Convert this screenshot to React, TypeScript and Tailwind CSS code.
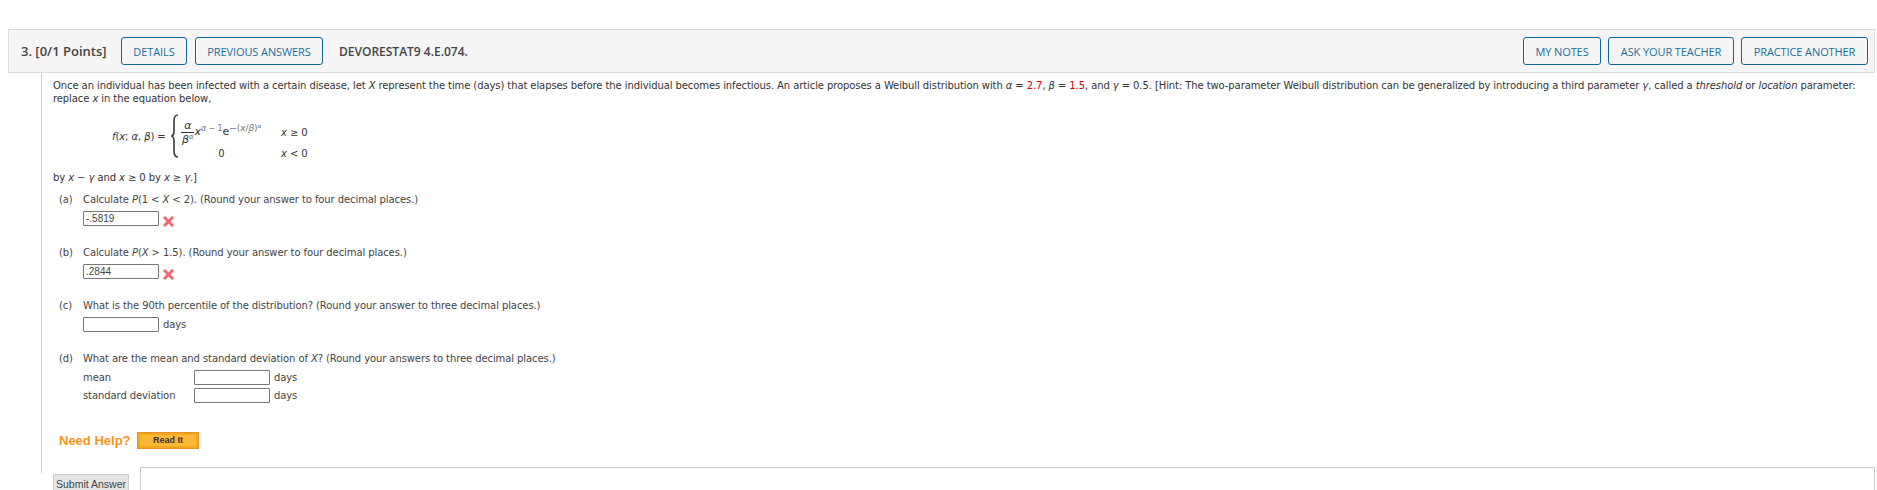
import React from 'react';

const ActionButton: React.FC<{ label: string; className: string }> = ({ label, className }) => (
  <button className={`h-[28px] rounded-[3px] border border-[#10669c] text-[11px] tracking-[-0.1px] text-[#1c6e9c] font-['Open_Sans',sans-serif] ${className}`}>
    {label}
  </button>
);

const Wrong: React.FC = () => (
  <svg width="11" height="11" viewBox="0 0 11 11" className="ml-[4px] mt-[5px]">
    <path d="M2 2 L9 9 M9 2 L2 9" stroke="#f06a70" strokeWidth="3" strokeLinecap="square" />
  </svg>
);

const AnswerBox: React.FC<{ value?: string }> = ({ value }) => (
  <div className="h-[15px] w-[76px] rounded-[1px] border border-[#777] bg-white pl-[2px] text-[10px] leading-[13px] tracking-normal text-[#444] font-['Liberation_Sans',sans-serif]">
    {value}
  </div>
);

const I: React.FC<{ children: React.ReactNode }> = ({ children }) => <i>{children}</i>;

const Formula: React.FC = () => (
  <div className="ml-[59px] mt-[9px] flex h-[44px] items-center">
    <span className="w-[58px]">
      <I>f</I>(<I>x</I>; <I>α</I>, <I>β</I>) =
    </span>
    <svg width="10" height="44" viewBox="0 0 10 44">
      <path d="M8 1 C5 1 4 3 4 7 V17 C4 20 3 22 1 22 C3 22 4 24 4 27 V37 C4 41 5 43 8 43" fill="none" stroke="#444" strokeWidth="1.7" />
    </svg>
    <div className="grid grid-cols-[101px_auto] self-start pt-[3px]">
      <div className="flex h-[30px] items-center">
        <div className="ml-[1px] flex flex-col items-center text-[11px] leading-[13px]">
          <I>α</I>
          <span className="block border-t border-[#333] px-[1px] leading-[13px]">
            <I>β</I>
            <sup className="text-[7px] leading-none text-[#777]"><I>α</I></sup>
          </span>
        </div>
        <span className="-mt-[1px] whitespace-nowrap text-[11px]">
          <I>x</I>
          <sup className="text-[8px] leading-none text-[#777]"><I>α</I> − 1</sup>
          e
          <sup className="text-[9px] leading-none text-[#777]">
            −(<I>x</I>/<I>β</I>)<sup className="text-[6px] leading-none"><I>α</I></sup>
          </sup>
        </span>
      </div>
      <div className="flex h-[30px] items-center"><I>x</I>&nbsp;≥ 0</div>
      <div className="flex h-[12px] items-center justify-center pr-[18px]">0</div>
      <div className="flex h-[12px] items-center"><I>x</I>&nbsp;&lt; 0</div>
    </div>
  </div>
);

export default function App() {
  return (
    <div className="h-[490px] overflow-hidden bg-white pl-[8px] pr-[2px] pt-[29px] text-[10px] leading-[13px] tracking-[-0.09px] text-[#333] font-['DejaVu_Sans',sans-serif]">
      <div className="flex h-[44px] items-center border border-[#ddd] bg-[#f5f5f5] pl-[12px] pr-[6px] font-['Open_Sans',sans-serif] text-[#444]">
        <span className="w-[100px] text-[13px] font-semibold tracking-normal">3. [0/1 Points]</span>
        <ActionButton label="DETAILS" className="w-[66px]" />
        <ActionButton label="PREVIOUS ANSWERS" className="ml-[8px] w-[128px]" />
        <span className="ml-[16px] text-[12px] font-semibold tracking-normal">DEVORESTAT9 4.E.074.</span>
        <div className="ml-auto flex gap-[7px]">
          <ActionButton label="MY NOTES" className="w-[78px]" />
          <ActionButton label="ASK YOUR TEACHER" className="w-[126px]" />
          <ActionButton label="PRACTICE ANOTHER" className="w-[127px]" />
        </div>
      </div>

      <div className="ml-[33px] h-[400px] border-l border-[#ccc] pl-[11px] pt-[6px]">
        <p className="whitespace-nowrap">
          Once an individual has been infected with a certain disease, let <I>X</I> represent the time (days) that elapses before the individual becomes infectious. An article proposes a Weibull distribution with <I>α</I> = <span className="text-[#d00]">2.7</span>, <I>β</I> = <span className="text-[#d00]">1.5</span>, and <I>γ</I> = 0.5. [Hint: The two-parameter Weibull distribution can be generalized by introducing a third parameter <I>γ</I>, called a <I>threshold</I> or <I>location</I> parameter:
        </p>
        <p>
          replace <I>x</I> in the equation below,
        </p>
        <Formula />
        <p className="mt-[13px]">
          by <I>x</I> − <I>γ</I> and <I>x</I> ≥ 0 by <I>x</I> ≥ <I>γ</I>.]
        </p>

        <div className="ml-[6px] mt-[9px] grid grid-cols-[24px_auto] text-[#444]">
          <span className="h-[13px]">(a)</span>
          <div>
            <p>Calculate <I>P</I>(1 &lt; <I>X</I> &lt; 2). (Round your answer to four decimal places.)</p>
            <div className="mt-[5px] flex h-[32px]"><AnswerBox value="-.5819" /><Wrong /></div>
          </div>
          <span className="mt-[3px]">(b)</span>
          <div className="mt-[3px]">
            <p>Calculate <I>P</I>(<I>X</I> &gt; 1.5). (Round your answer to four decimal places.)</p>
            <div className="mt-[5px] flex h-[32px]"><AnswerBox value=".2844" /><Wrong /></div>
          </div>
          <span className="mt-[3px]">(c)</span>
          <div className="mt-[3px]">
            <p>What is the 90th percentile of the distribution? (Round your answer to three decimal places.)</p>
            <div className="mt-[5px] flex h-[32px] gap-[4px]"><AnswerBox /><span className="leading-[15px]">days</span></div>
          </div>
          <span className="mt-[3px]">(d)</span>
          <div className="mt-[3px]">
            <p>What are the mean and standard deviation of <I>X</I>? (Round your answers to three decimal places.)</p>
            <div className="mt-[5px] grid grid-cols-[111px_76px_auto] gap-y-[3px] leading-[15px]">
              <span>mean</span><AnswerBox /><span className="ml-[4px]">days</span>
              <span>standard deviation</span><AnswerBox /><span className="ml-[4px]">days</span>
            </div>
          </div>
        </div>

        <div className="ml-[6px] mt-[29px] flex h-[16px] items-center tracking-normal font-['Liberation_Sans',sans-serif]">
          <span className="w-[78px] text-[13px] font-bold text-[#f7941d]">Need Help?</span>
          <button className="h-[17px] w-[62px] border border-[#e8912a] bg-[#fdb933] text-[9px] font-bold leading-none text-[#333] shadow-[inset_0_0_0_2px_#f5a623]">
            Read It
          </button>
        </div>

        <div className="mt-[19px] flex items-start">
          <button className="mt-[7px] h-[20px] w-[76px] whitespace-nowrap border border-[#ccc] bg-[#e6e6e6] text-[10.5px] tracking-normal text-[#444] font-['Liberation_Sans',sans-serif]">
            Submit Answer
          </button>
          <div className="ml-[11px] h-[40px] flex-1 border border-[#ccc]" />
        </div>
      </div>
    </div>
  );
}
